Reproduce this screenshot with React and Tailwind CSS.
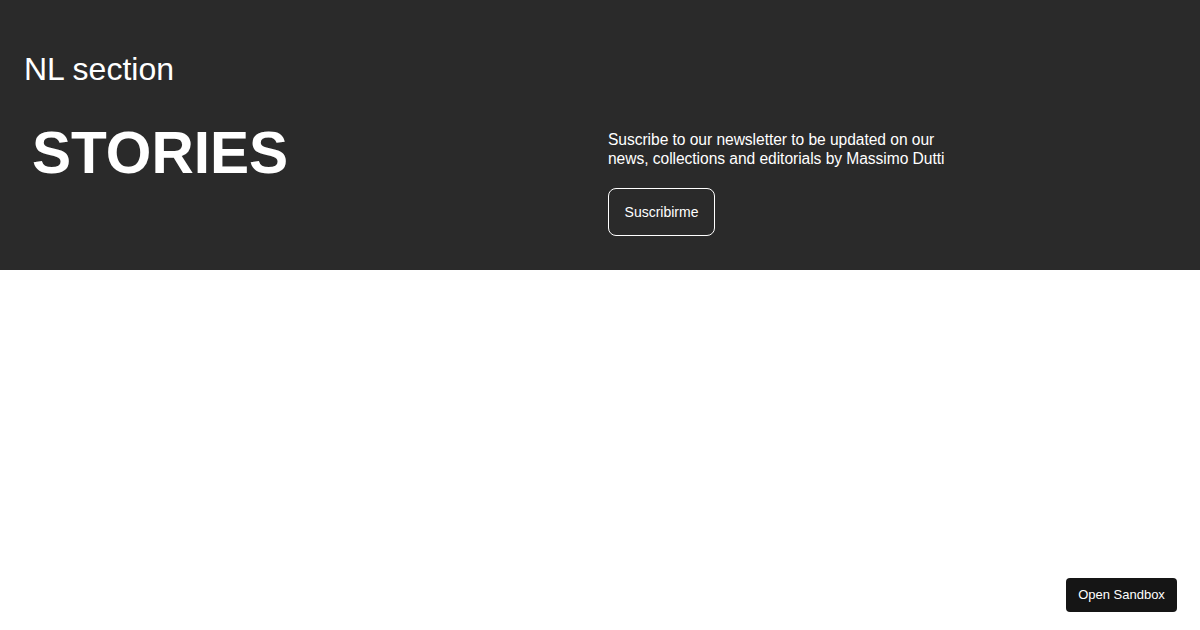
export default function App() {
  return (
    <div className="min-h-[630px] bg-white relative" style={{ fontFamily: '"Liberation Sans", Arial, sans-serif' }}>
      <section className="h-[270px] bg-[#2a2a2a] text-white px-6 pt-[53px]">
        <h2 className="text-[32px] leading-[32px] font-normal">NL section</h2>
        <div className="flex mt-[39px]">
          <div className="w-[584px] pl-[8px]">
            <h1 className="text-[58.6px] leading-[58px] font-bold mt-0">STORIES</h1>
          </div>
          <div className="flex flex-col items-start pt-[6px]">
            <p className="text-[15.6px] leading-[19px] w-[360px] tracking-[-0.05px]">
              Suscribe to our newsletter to be updated on our news, collections and editorials by Massimo Dutti
            </p>
            <button className="mt-[20px] w-[107px] h-[48px] border border-white rounded-[8px] text-[14px] text-white">
              Suscribirme
            </button>
          </div>
        </div>
      </section>
      <button className="absolute right-[23px] top-[578px] w-[111px] h-[34px] bg-[#151515] text-white text-[13px] rounded-[4px]">
        Open Sandbox
      </button>
    </div>
  );
}
